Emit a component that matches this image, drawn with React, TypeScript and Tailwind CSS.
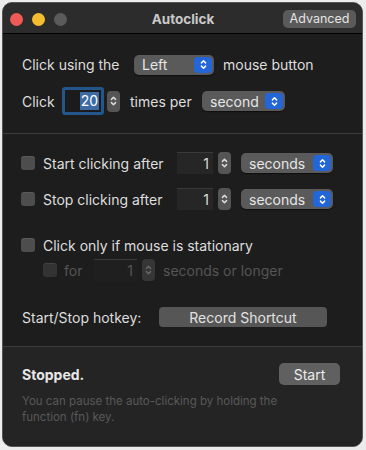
import React from "react";

const font = { fontFamily: "Inter, 'Noto Sans', 'Liberation Sans', sans-serif" };

function Chevrons({ className = "" }: { className?: string }) {
  return (
    <svg viewBox="0 0 10 14" className={className} fill="none" stroke="currentColor" strokeWidth="1.6" strokeLinecap="round" strokeLinejoin="round">
      <path d="M2.7 5.2 L5 2.9 L7.3 5.2" />
      <path d="M2.7 8.8 L5 11.1 L7.3 8.8" />
    </svg>
  );
}

function Popup({ label, width }: { label: string; width: string }) {
  return (
    <div className={`${width} h-[20px] rounded-[5px] bg-[#5a5a5a] flex items-center justify-between pl-[8px] pr-[2px] shadow-[0_1px_1px_rgba(0,0,0,0.5)]`}>
      <span className="text-[14px] text-[#e6e6e6]">{label}</span>
      <div className="w-[18px] h-[16px] rounded-[4px] bg-[#2366d8] flex items-center justify-center text-white">
        <Chevrons className="w-[9px] h-[13px]" />
      </div>
    </div>
  );
}

function Stepper({ disabled = false, h = "h-[22px]" }: { disabled?: boolean; h?: string }) {
  return (
    <div className={`w-[13px] ${h} rounded-[4px] flex items-center justify-center ${disabled ? "bg-[#363636] text-[#666]" : "bg-[#555] text-[#dcdcdc]"}`}>
      <Chevrons className="w-[9px] h-[16px]" />
    </div>
  );
}

function Checkbox({ disabled = false }: { disabled?: boolean }) {
  return (
    <div className={`w-[14px] h-[14px] rounded-[3px] ${disabled ? "bg-[#333]" : "bg-[#4d4d4d]"} shadow-[inset_0_1px_0_rgba(255,255,255,0.08)]`} />
  );
}

function NumField({ value, width, disabled = false }: { value: string; width: string; disabled?: boolean }) {
  return (
    <div className={`${width} h-[22px] ${disabled ? "bg-[#1f1f1f] text-[#555]" : "bg-[#262626] text-[#dcdcdc]"} border-t border-[#3a3a3a] flex items-center justify-end pr-[4px] text-[14px]`}>
      {value}
    </div>
  );
}

export default function App() {
  return (
    <div className="w-[366px] h-[450px] bg-[#ececec] pt-[2px] pl-[2px]" style={font}>
      <div className="w-[361px] h-[445px] rounded-[10px] border border-[#555] bg-[#1d1d1d] overflow-hidden flex flex-col">
        {/* title bar */}
        <div className="relative h-[31px] shrink-0 bg-[#2c2c2c] border-b border-black flex items-center pl-[7px]">
          <div className="flex gap-[9px] mt-[2px]">
            <div className="w-[13px] h-[13px] rounded-full bg-[#ee5a55]" />
            <div className="w-[13px] h-[13px] rounded-full bg-[#f4bc2f]" />
            <div className="w-[13px] h-[13px] rounded-full bg-[#5b5b5b]" />
          </div>
          <div className="absolute left-0 right-0 top-0 h-[31px] flex items-center justify-center pointer-events-none">
            <span className="text-[13.5px] font-bold text-[#c9c9c9] ml-[1px] mt-[2px]">Autoclick</span>
          </div>
          <div className="ml-auto mr-[6px] mt-[2px] w-[73px] h-[18px] rounded-[5px] bg-[#5a5a5a] flex items-center justify-center text-[12.5px] text-[#e4e4e4]">
            Advanced
          </div>
        </div>

        {/* section 1 */}
        <div className="shrink-0 pt-[20px] pb-[18px] pl-[19px] border-b border-[#3c3c3c] text-[14px] text-[#dedede]">
          <div className="flex items-center h-[21px]">
            <span className="w-[112px]">Click using the</span>
            <Popup label="Left" width="w-[80px]" />
            <span className="ml-[9px]">mouse button</span>
          </div>
          <div className="flex items-center h-[28px] mt-[12px]">
            <span className="w-[40px]">Click</span>
            <div className="w-[42px] h-[28px] border-[3px] border-[#23578c] rounded-[3px] bg-[#1b1b1b] flex items-center justify-end pr-[2px]">
              <span className="bg-[#3b6aa5] text-white px-[1px] leading-[18px]">20</span>
            </div>
            <div className="ml-[3px]">
              <Stepper h="h-[21px]" />
            </div>
            <span className="ml-[10px] w-[72px]">times per</span>
            <Popup label="second" width="w-[83px]" />
          </div>
        </div>

        {/* section 2 */}
        <div className="shrink-0 pt-[18px] pb-[19px] pl-[18px] border-b border-[#3c3c3c] text-[14px] text-[#dedede]">
          <div className="flex items-center h-[22px]">
            <Checkbox />
            <span className="ml-[8px] w-[134px]">Start clicking after</span>
            <NumField value="1" width="w-[36px]" />
            <div className="ml-[5px]"><Stepper /></div>
            <div className="ml-[10px]"><Popup label="seconds" width="w-[92px]" /></div>
          </div>
          <div className="flex items-center h-[22px] mt-[14px]">
            <Checkbox />
            <span className="ml-[8px] w-[134px]">Stop clicking after</span>
            <NumField value="1" width="w-[36px]" />
            <div className="ml-[5px]"><Stepper /></div>
            <div className="ml-[10px]"><Popup label="seconds" width="w-[92px]" /></div>
          </div>
          <div className="flex items-center h-[20px] mt-[25px]">
            <Checkbox />
            <span className="ml-[8px]">Click only if mouse is stationary</span>
          </div>
          <div className="flex items-center h-[22px] mt-[4px] pl-[22px] text-[#555]">
            <Checkbox disabled />
            <span className="ml-[7px] w-[30px]">for</span>
            <NumField value="1" width="w-[43px]" disabled />
            <div className="ml-[5px]"><Stepper disabled /></div>
            <span className="ml-[8px]">seconds or longer</span>
          </div>
          <div className="flex items-center h-[20px] mt-[26px] pl-[1px]">
            <span className="w-[137px]">Start/Stop hotkey:</span>
            <div className="w-[168px] h-[20px] rounded-[4px] bg-[#565656] flex items-center justify-center text-[#e2e2e2]">
              Record Shortcut
            </div>
          </div>
        </div>

        {/* bottom */}
        <div className="flex-1 bg-[#242424] pl-[19px] pr-[22px] pt-[16px]">
          <div className="flex items-center justify-between h-[22px]">
            <span className="text-[14px] font-bold text-[#e8e8e8]">Stopped.</span>
            <div className="w-[61px] h-[22px] rounded-[5px] bg-[#606060] flex items-center justify-center text-[14px] text-[#ececec]">
              Start
            </div>
          </div>
          <p className="mt-[8px] text-[11.5px] leading-[16px] text-[#595959]">
            You can pause the auto-clicking by holding the
            <br />
            function (fn) key.
          </p>
        </div>
      </div>
    </div>
  );
}
